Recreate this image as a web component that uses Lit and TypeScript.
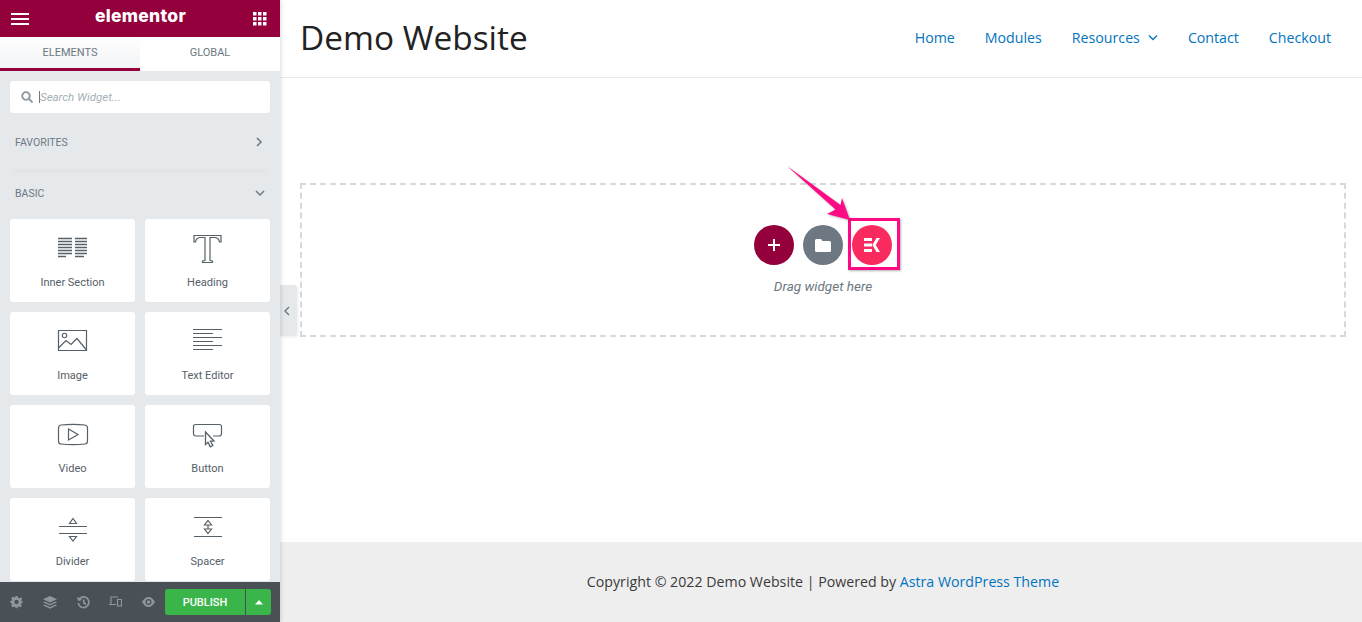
import { LitElement, html, css, svg } from "lit";
import { customElement } from "lit/decorators.js";

const stroke = (c: unknown) => html`<svg class="wicon" viewBox="0 0 40 34" fill="none" stroke="#556068" stroke-width="1.1">${c}</svg>`;

const icons: Record<string, unknown> = {
  inner: stroke(svg`<path stroke-width="1.5" d="M5 5.500H19M22 5.500H34M5 8.500H19M22 8.500H34M5 11.500H19M22 11.500H34M5 14.500H19M22 14.500H34M5 17.500H19M22 17.500H34M5 20.500H19M22 20.500H34M5 23.500H13M22 23.500H31"/>`),
  heading: stroke(svg`<path stroke-width="1.2" d="M6 9V2.500H33V9H31.500Q31 5 27 4.500H22V27.500L24.500 28V29.500H14.500V28L17 27.500V4.500H12Q8 5 7.500 9Z"/>`),
  image: stroke(svg`<path stroke-width="1.2" d="M5.500 4.500H33.500V24.500H5.500Z"/><circle cx="11.500" cy="9.500" r="2.200"/><path stroke-width="1.2" d="M5.500 22L13 14.500L18 18.500L24 12.500L33.500 24"/>`),
  text: stroke(svg`<path stroke-width="1.2" d="M5 3.500H34M5 7.500H25M5 11.500H34M5 15.500H25M5 19.500H34M5 23.500H25"/>`),
  video: stroke(svg`<path stroke-width="1.200" d="M8 6Q20 4.700 32 6Q34.500 6.500 34.500 9V22Q34.500 25 32 25Q20 26.300 8 25Q5.500 25 5.500 22V9Q5.500 6.500 8 6Z"/><path stroke-width="1.200" d="M15.500 10V21L25 15.500Z"/>`),
  button: stroke(svg`<path stroke-width="1.200" d="M16 17H8Q5.500 17 5.500 14.500V7.500Q5.500 5.500 8 5.500H31Q33.500 5.500 33.500 7.500V14.500Q33.500 17 31 17H25"/><path stroke-width="1.300" fill="#fff" d="M17.500 13L26 22L22.500 22.200L24.800 26.500L22.300 27.800L20 23.300L17.500 25.500Z"/>`),
  divider: stroke(svg`<path stroke-width="1.200" d="M6 14.500H34M6 21.500H34"/><path stroke-width="1.200" d="M20 6.500L23.500 11.500H16.500ZM20 29L23.500 24.500H16.500Z"/>`),
  spacer: stroke(svg`<path stroke-width="1.200" d="M6 5.500H34M6 24.500H34"/><path stroke-width="1.200" d="M20 8.500L23.500 13H16.500ZM20 21.500L23.500 17H16.500ZM20 13V17"/>`),
};

const widgets = [
  ["Inner Section", "inner"], ["Heading", "heading"],
  ["Image", "image"], ["Text Editor", "text"],
  ["Video", "video"], ["Button", "button"],
  ["Divider", "divider"], ["Spacer", "spacer"],
];

@customElement("app-root")
export class AppRoot extends LitElement {
  static styles = css`
    :host { display: block; width: 1362px; height: 622px; overflow: hidden; position: relative; background: #fff; }
    .page { display: flex; height: 622px; }
    aside { width: 280px; flex: none; display: flex; flex-direction: column; background: #e6e9ec; font-family: Roboto, sans-serif; box-shadow: 1px 0 4px rgba(0,0,0,.14); position: relative; z-index: 2; }
    .top { height: 37px; background: #93003c; display: flex; align-items: center; justify-content: space-between; padding: 0 13px 0 11px; flex: none; }
    .logo { color: #fff; font: 800 17.500px/1 Inter, sans-serif; letter-spacing: .3px; padding-right: 1px; margin-top: -5px; }
    .tabs { display: flex; height: 34px; flex: none; font-size: 11px; color: #6d7882; }
    .tab { width: 140px; display: flex; align-items: center; justify-content: center; background: #fff; padding-bottom: 3px; box-sizing: border-box; }
    .tab.on { background: linear-gradient(#fff, #f1f3f5); border-bottom: 3px solid #93003c; padding-bottom: 0; }
    .scroll { flex: 1; min-height: 0; overflow: hidden; padding: 10px 10px 0; display: flex; flex-direction: column; }
    .search { height: 32px; background: #fff; border-radius: 3px; display: flex; align-items: center; padding-left: 11px; gap: 6px; flex: none; color: #a4afb7; font-size: 11.500px; font-style: italic; }
    .caret { width: 1px; height: 12px; background: #6d7882; margin-right: -6px; }
    .cat { display: flex; align-items: center; justify-content: space-between; height: 20px; font-size: 10.500px; color: #6d7882; padding: 0 7px 0 5px; flex: none; }
    .fav { margin-top: 19px; }
    .sep { height: 4px; background: #e1e4e7; margin: 17px 5px 0; flex: none; }
    .basic { margin-top: 10px; padding-right: 5px; }
    .grid { display: grid; grid-template-columns: 125px 125px; gap: 10px; margin-top: 16px; }
    .card { height: 83px; background: #fff; border-radius: 3px; display: flex; flex-direction: column; align-items: center; color: #556068; font-size: 11px; box-sizing: border-box; padding-top: 14px; flex: none; }
    .wicon { width: 40px; height: 34px; display: block; margin-bottom: 9px; }
    .bar { height: 40px; flex: none; background: #495157; display: flex; align-items: center; padding-left: 10px; position: relative; box-shadow: 0 -1px 0 #e6e9ec; }
    .bar svg { display: block; flex: none; }
    .tools { display: flex; width: 145px; align-items: center; justify-content: space-between; margin-right: 10px; }
    .pub { display: flex; height: 26px; color: #fff; font-size: 11px; font-weight: 500; }
    .pub b { width: 80px; background: #39b54a; border-radius: 3px 0 0 3px; display: flex; align-items: center; justify-content: center; font-weight: 500; }
    .pub i { width: 25px; margin-left: 1px; background: #39b54a; border-radius: 0 3px 3px 0; display: flex; align-items: center; justify-content: center; }
    main { flex: 1; min-width: 0; display: flex; flex-direction: column; font-family: "Open Sans", sans-serif; }
    header { border-bottom: 1px solid #eaeaea; display: flex; align-items: center; justify-content: space-between; padding: 0 31px 2px 20px; flex: none; height: 75px; }
    .title { font-size: 33.400px; color: #222; font-weight: 400; line-height: 1; }
    nav { display: flex; align-items: center; gap: 30px; font-size: 14.200px; color: #0274be; }
    nav span { display: flex; align-items: center; gap: 8px; }
    .content { flex: 1; min-height: 0; padding: 105px 16px 0 20px; position: relative; }
    .drop { height: 154px; box-sizing: border-box; border: 2px dashed #d5d8dc; display: flex; flex-direction: column; align-items: center; padding-top: 40px; }
    .btns { display: flex; gap: 9px; }
    .btn { width: 40px; height: 40px; border-radius: 50%; display: flex; align-items: center; justify-content: center; }
    .add { background: #93003c; }
    .lib { background: #6d7882; }
    .ek { background: #f92a5e; }
    .hint { font: italic 13.500px/1 Roboto, sans-serif; color: #6d7882; margin-top: 15px; }
    .toggle { position: absolute; left: 0; top: 207px; width: 17px; height: 51px; box-sizing: border-box; padding-right: 4px; background: #e6e9ec; border-radius: 0 3px 3px 0; display: flex; align-items: center; justify-content: center; box-shadow: 1px 1px 3px rgba(0,0,0,.08); }
    footer { height: 80px; flex: none; box-sizing: border-box; padding: 0 0 2px 4px; background: #eeeeee; display: flex; align-items: center; justify-content: center; font-size: 14.200px; color: #3a3a3a; }
    footer a { color: #0274be; white-space: pre; }
    .mark { position: absolute; left: 848px; top: 218px; width: 52px; height: 52px; box-sizing: border-box; border: 3px solid #ff0a85; box-shadow: 1px 1px 2px rgba(0,0,0,.3); z-index: 3; }
    .arrow { position: absolute; left: 780px; top: 160px; width: 80px; height: 70px; z-index: 3; overflow: visible; filter: drop-shadow(1px 1px 1px rgba(0,0,0,.3)); }
  `;

  render() {
    return html`
      <div class="page">
        <aside>
          <div class="top">
            <svg width="18" height="12" viewBox="0 0 18 12" fill="#fff"><path d="M0 0H18V2H0ZM0 5H18V7H0ZM0 10H18V12H0Z"/></svg>
            <span class="logo">elementor</span>
            <svg width="14" height="14" viewBox="0 0 14 14" fill="#fff"><path d="M0 0H3.500V3.500H0ZM5 0H8.500V3.500H5ZM10 0H13.500V3.500H10ZM0 5H3.500V8.500H0ZM5 5H8.500V8.500H5ZM10 5H13.500V8.500H10ZM0 10H3.500V13.500H0ZM5 10H8.500V13.500H5ZM10 10H13.500V13.500H10Z"/></svg>
          </div>
          <div class="tabs"><div class="tab on">ELEMENTS</div><div class="tab">GLOBAL</div></div>
          <div class="scroll">
            <div class="search">
              <svg width="12" height="12" viewBox="0 0 12 12" fill="none" stroke="#8b959c" stroke-width="1.800"><circle cx="5" cy="5" r="3.800"/><path d="M8 8L11.500 11.500"/></svg>
              <span class="caret"></span><span>Search Widget...</span>
            </div>
            <div class="cat fav"><span>FAVORITES</span>
              <svg width="8" height="10" viewBox="0 0 8 10" fill="none" stroke="#6d7882" stroke-width="1.500"><path d="M2 1L6 5L2 9"/></svg></div>
            <div class="sep"></div>
            <div class="cat basic"><span>BASIC</span>
              <svg width="10" height="8" viewBox="0 0 10 8" fill="none" stroke="#6d7882" stroke-width="1.500"><path d="M1 2L5 6L9 2"/></svg></div>
            <div class="grid">
              ${widgets.map(([n, k]) => html`<div class="card">${icons[k]}<span>${n}</span></div>`)}
            </div>
          </div>
          <div class="bar">
            <div class="tools">
              <svg width="13" height="14" viewBox="0 0 24 24" fill="#8d979f"><path fill-rule="evenodd" d="M10 1H14L14.700 4.200L17 5.200L19.800 3.500L22.500 6.200L20.800 9L21.800 11L23.500 10.500V13.500L21 14.300L20.300 16.500L21.800 19.300L19.300 21.800L16.500 20.300L14.300 21L13.500 23.500H10.500L9.700 21L7.500 20.300L4.700 21.800L2.200 19.300L3.700 16.500L3 14.300L.5 13.500V10.500L3 9.700L3.700 7.500L2.200 4.700L4.700 2.200L7.500 3.700L9.500 3ZM12 8A4 4 0 1 0 12 16A4 4 0 1 0 12 8Z"/></svg>
              <svg width="14" height="13" viewBox="0 0 14 13" fill="#8d979f"><path d="M7 0L14 3.200L7 6.400L0 3.200ZM1.500 5.400L7 7.900L12.500 5.400L14 6.200L7 9.400L0 6.200ZM1.500 8.400L7 10.900L12.500 8.400L14 9.200L7 12.800L0 9.200Z"/></svg>
              <svg width="13" height="13" viewBox="0 0 13 13" fill="none" stroke="#8d979f" stroke-width="1.700"><path d="M2 3.500A5.300 5.300 0 1 1 1.300 7M.5 1.500L2 4L4.500 3.500M6.800 3.500V7L9 8.300"/></svg>
              <svg width="13" height="12" viewBox="0 0 13 12" fill="none" stroke="#8d979f" stroke-width="1.200"><path d="M2 8V1H9M0 8.500H7M8.500 3.500H12.500V10H8.500Z"/></svg>
              <svg width="13" height="10" viewBox="0 0 13 10" fill="#8d979f"><path fill-rule="evenodd" d="M0 5Q3 0 6.500 0T13 5Q10 10 6.500 10T0 5ZM6.500 2A3 3 0 1 0 6.500 8A3 3 0 1 0 6.500 2Z"/><circle cx="6.500" cy="5" r="1.800"/></svg>
            </div>
            <div class="pub"><b>PUBLISH</b><i><svg width="8" height="5" viewBox="0 0 8 5" fill="#fff"><path d="M4 0L8 4.500H0Z"/></svg></i></div>
          </div>
        </aside>
        <main>
          <header>
            <div class="title">Demo Website</div>
            <nav>
              <span>Home</span><span>Modules</span>
              <span>Resources <svg width="10" height="7" viewBox="0 0 10 7" fill="none" stroke="#0274be" stroke-width="1.300"><path d="M1 1.500L5 5.500L9 1.500"/></svg></span>
              <span>Contact</span><span>Checkout</span>
            </nav>
          </header>
          <div class="content">
            <div class="toggle"><svg width="6" height="10" viewBox="0 0 6 10" fill="none" stroke="#6d7882" stroke-width="1.400"><path d="M5 1L1 5L5 9"/></svg></div>
            <div class="drop">
              <div class="btns">
                <div class="btn add"><svg width="12" height="12" viewBox="0 0 12 12" fill="#fff"><path d="M5 0H7V5H12V7H7V12H5V7H0V5H5Z"/></svg></div>
                <div class="btn lib"><svg width="16" height="13" viewBox="0 0 16 13" fill="#fff"><path d="M1.500 0H6L7.500 2H14.500Q16 2 16 3.500V11.500Q16 13 14.500 13H1.500Q0 13 0 11.500V1.500Q0 0 1.500 0Z"/></svg></div>
                <div class="btn ek"><svg width="16" height="14" viewBox="0 0 16 14" fill="#fff"><path d="M0 0H8V3H0ZM0 5.500H8V8.500H0ZM0 11H8V14H0ZM12.500 0H16L11.800 7L16 14H12.500L8.300 7Z"/></svg></div>
              </div>
              <div class="hint">Drag widget here</div>
            </div>
          </div>
          <footer>Copyright © 2022 Demo Website | Powered by&nbsp;<a>Astra WordPress Theme</a></footer>
        </main>
      </div>
      <div class="mark"></div>
      <svg class="arrow" viewBox="0 0 80 70"><path fill="#ff0a85" d="M7 6L60.500 45L62 38L70 60L47 54L55.500 49.500Z"/></svg>
    `;
  }
}
